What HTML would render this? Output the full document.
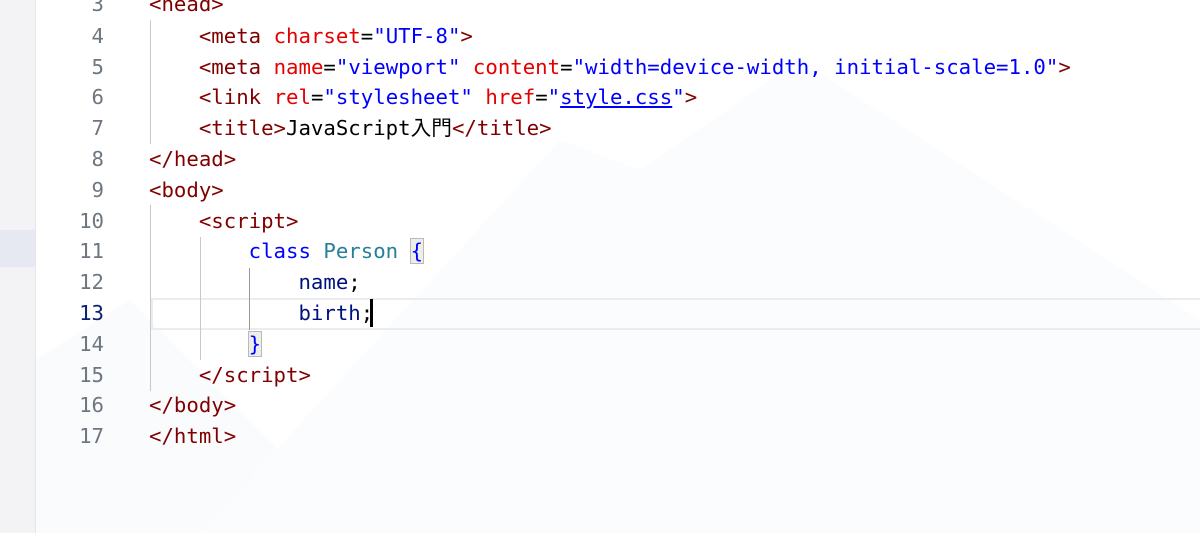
<!DOCTYPE html>
<html><head><meta charset="utf-8"><style>
body{margin:0;width:1200px;height:533px;overflow:hidden;background:#fff;position:relative;font-family:"DejaVu Sans Mono","Noto Sans CJK JP",monospace;font-size:20.7px}
.gut{position:absolute;left:0;top:0;width:35px;height:533px;background:#f3f3f5;border-right:1px solid #e6e6ea}
.hl{position:absolute;left:0;top:230px;width:35px;height:37px;background:#e6e8f2}
.w{position:absolute;left:0;top:0;width:1200px;height:533px}
.ln{position:absolute;width:104px;left:0;text-align:right;color:#6e7681;line-height:31px;height:31px}
.c{position:absolute;left:149px;white-space:pre;color:#000;line-height:31px;height:31px}
.t{color:#800000}.a{color:#e50000}.s{color:#0000ff}.k{color:#0000ff}.p{color:#267f99}.v{color:#001080}
.g{position:absolute;width:1px;background:#c8c8c8}
.cur{position:absolute;left:151px;top:298px;width:1049px;height:28px;border:2px solid #ececec;border-right:none}
.br{outline:1px solid #b9b9b9;background:#eceeea}
</style></head><body>
<svg style="position:absolute;left:0;top:0" width="1200" height="533"><polygon points="35,360 130,300 360,533 35,533" fill="#fafbfd"/><polygon points="200,533 560,140 640,170 800,60 1200,320 1200,533" fill="#fbfcfe"/></svg>
<div class="gut"></div><div class="hl"></div>
<div class="cur"></div>
<div class="g" style="left:150px;top:20px;height:124px"></div>
<div class="g" style="left:150px;top:205px;height:186px"></div>
<div class="g" style="left:200px;top:237px;height:123px"></div>
<div class="g" style="left:249px;top:268px;height:62px;background:#999"></div>
<div style="position:absolute;left:370px;top:299px;width:3px;height:28px;background:#000"></div>
<div class="w">
<div class="ln" style="top:-11px">3</div><div class="c" style="top:-11px"><span class="t">&lt;head&gt;</span></div>
<div class="ln" style="top:21px">4</div><div class="c" style="top:21px">    <span class="t">&lt;meta</span> <span class="a">charset</span>=<span class="s">"UTF-8"</span><span class="t">&gt;</span></div>
<div class="ln" style="top:52px">5</div><div class="c" style="top:52px">    <span class="t">&lt;meta</span> <span class="a">name</span>=<span class="s">"viewport"</span> <span class="a">content</span>=<span class="s">"width=device-width, initial-scale=1.0"</span><span class="t">&gt;</span></div>
<div class="ln" style="top:82px">6</div><div class="c" style="top:82px">    <span class="t">&lt;link</span> <span class="a">rel</span>=<span class="s">"stylesheet"</span> <span class="a">href</span>=<span class="s">"<u>style.css</u>"</span><span class="t">&gt;</span></div>
<div class="ln" style="top:113px">7</div><div class="c" style="top:113px">    <span class="t">&lt;title&gt;</span>JavaScript入門<span class="t">&lt;/title&gt;</span></div>
<div class="ln" style="top:144px">8</div><div class="c" style="top:144px"><span class="t">&lt;/head&gt;</span></div>
<div class="ln" style="top:175px">9</div><div class="c" style="top:175px"><span class="t">&lt;body&gt;</span></div>
<div class="ln" style="top:206px">10</div><div class="c" style="top:206px">    <span class="t">&lt;script&gt;</span></div>
<div class="ln" style="top:236px">11</div><div class="c" style="top:236px">        <span class="k">class</span> <span class="p">Person</span> <span class="k br">{</span></div>
<div class="ln" style="top:267px">12</div><div class="c" style="top:267px">            <span class="v">name</span>;</div>
<div class="ln" style="top:298px;color:#0b216f">13</div><div class="c" style="top:298px">            <span class="v">birth</span>;</div>
<div class="ln" style="top:329px">14</div><div class="c" style="top:329px">        <span class="k br">}</span></div>
<div class="ln" style="top:360px">15</div><div class="c" style="top:360px">    <span class="t">&lt;/script&gt;</span></div>
<div class="ln" style="top:390px">16</div><div class="c" style="top:390px"><span class="t">&lt;/body&gt;</span></div>
<div class="ln" style="top:421px">17</div><div class="c" style="top:421px"><span class="t">&lt;/html&gt;</span></div>
</div>
</body></html>
